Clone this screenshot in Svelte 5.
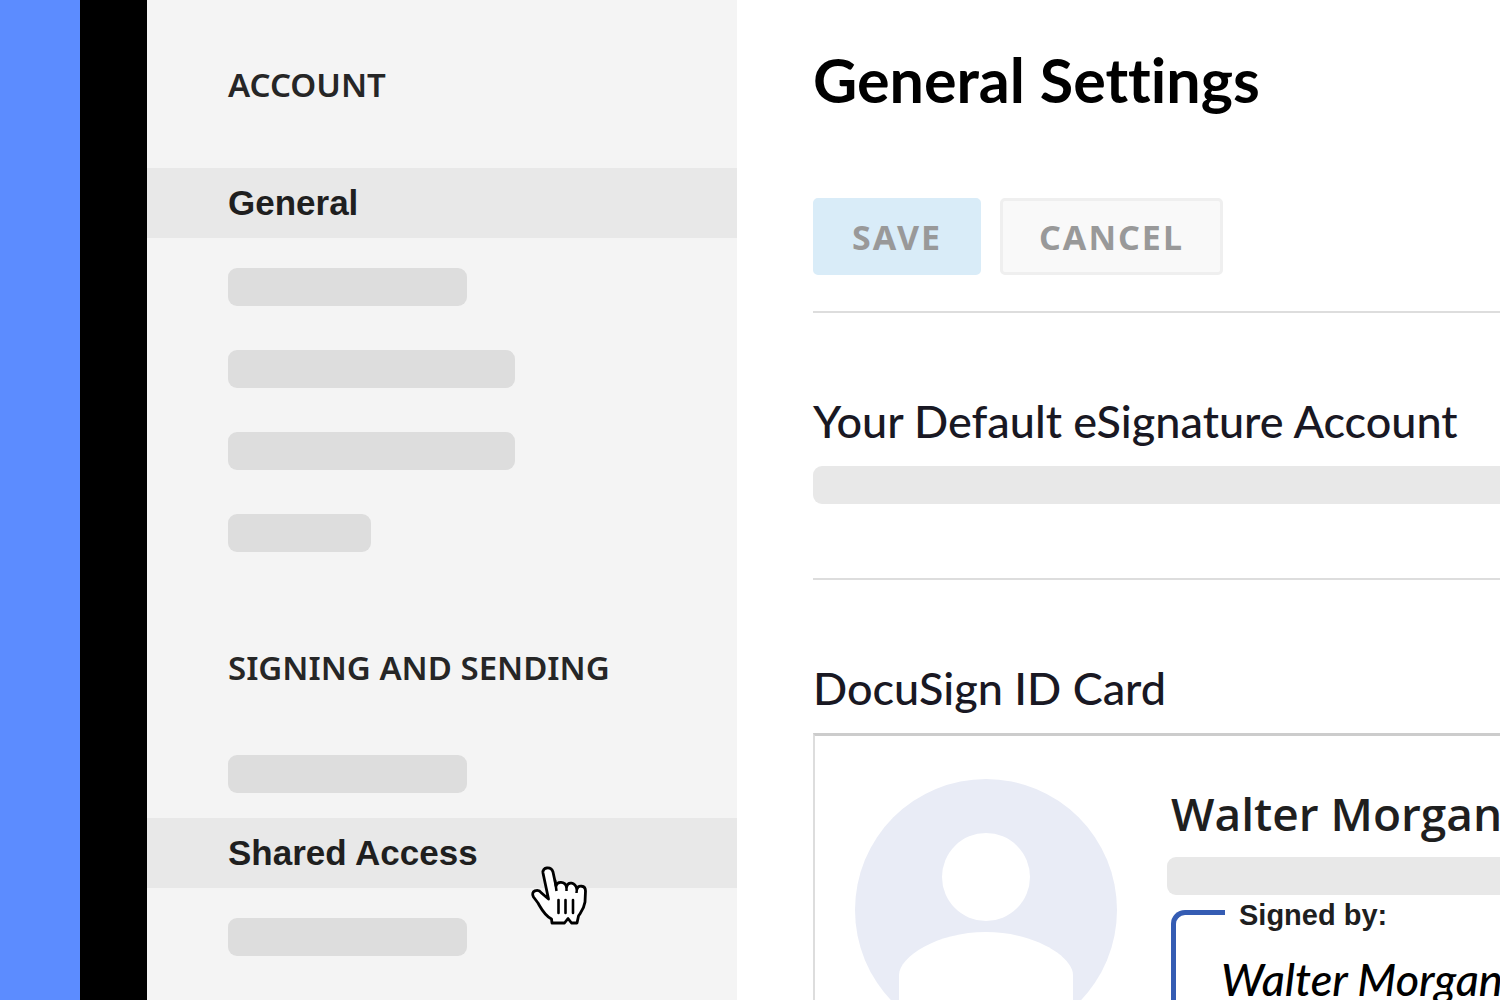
<script>
  const accountItems = ['medium', 'large', 'large', 'small'];
</script>

<div class="page">
  <div class="backdrop"></div>
  <div class="frame"></div>

  <nav class="sidebar" aria-label="Settings">
    <h2 class="group">ACCOUNT</h2>
    <a class="row" href="#general">General</a>
    <div class="placeholders">
      {#each accountItems as size}
        <span class="bar {size}"></span>
      {/each}
    </div>

    <h2 class="group second">SIGNING AND SENDING</h2>
    <span class="bar medium"></span>
    <a class="row shared" href="#shared-access">
      Shared Access
      <svg class="pointer" viewBox="0 0 120 90" aria-hidden="true">
        <path
          d="M48.500 49L43 23C42 17 51 16 53 22L56 36C57 31 65 31 66.500 37C68 31 75 32 77 39C78 35 85.500 35 85.500 41L85 52C84 59 81 62 78.500 66L77 73H71.500L68 68.500L64.500 73H52L51.500 69C44 65 41 58 38 53L33.500 47C30 41 38 38 41.500 43Z"
          fill="#fff" stroke="#000" stroke-width="2.800" stroke-linejoin="round" />
        <path d="M55 30L56.500 41M66.500 36V41M77 38L76.500 43" fill="none" stroke="#000" stroke-width="2.500" />
        <path d="M58.500 50V63M65.500 50V63M73 50V63" fill="none" stroke="#000" stroke-width="2.600" stroke-linecap="round" />
      </svg>
    </a>
    <span class="bar medium last"></span>
  </nav>

  <main class="content">
    <h1>General Settings</h1>
    <div class="actions">
      <button class="save" type="button">SAVE</button>
      <button class="cancel" type="button">CANCEL</button>
    </div>

    <section class="block">
      <h2>Your Default eSignature Account</h2>
      <span class="bar wide"></span>
    </section>

    <section class="block">
      <h2>DocuSign ID Card</h2>
      <div class="card">
        <svg class="avatar" viewBox="0 0 262 262" aria-hidden="true">
          <circle cx="131" cy="131" r="131" fill="#e9ecf6" />
          <circle cx="131" cy="98" r="44" fill="#fff" />
          <path d="M44 262V196C44 178 82 153 131 153S218 178 218 196V262Z" fill="#fff" />
        </svg>
        <div class="identity">
          <p class="name">Walter Morgan</p>
          <span class="bar wide"></span>
          <div class="signature">
            <div class="bracket"></div>
            <div class="signed">
              <p class="label">Signed by:</p>
              <p class="script">Walter Morgan</p>
            </div>
          </div>
        </div>
      </div>
    </section>
  </main>
</div>

<style>
  :global(body) {
    margin: 0;
    background: #fff;
  }

  .page {
    display: flex;
    height: 100vh;
    overflow: hidden;
    font-family: "Liberation Sans", Arial, sans-serif;
    font-variant-ligatures: none;
    color: #1f1f1f;
  }

  h1,
  h2,
  p {
    margin: 0;
  }

  .backdrop {
    flex: 0 0 80px;
    background: #5c8cff;
  }

  .frame {
    flex: 0 0 67px;
    background: #000;
  }

  .sidebar {
    flex: 0 0 590px;
    background: #f4f4f4;
    display: flex;
    flex-direction: column;
  }

  .group {
    padding: 65px 0 63px 81px;
    font-family: "Noto Sans", sans-serif;
    font-size: 33px;
    font-weight: 600;
    line-height: 40px;
    color: #262626;
  }

  .group.second {
    padding: 96px 0 67px 81px;
  }

  .row {
    position: relative;
    padding-left: 81px;
    font-size: 35px;
    font-weight: 700;
    line-height: 70px;
    color: #1f1f1f;
    background: #e8e8e8;
    text-decoration: none;
    cursor: pointer;
  }

  .placeholders {
    display: flex;
    flex-direction: column;
    gap: 44px;
    padding-top: 30px;
  }

  .bar {
    display: block;
    flex: none;
    height: 38px;
    border-radius: 9px;
    background: #ddd;
  }

  .sidebar .bar {
    margin-left: 81px;
  }

  .small {
    width: 143px;
  }

  .medium {
    width: 239px;
  }

  .large {
    width: 287px;
  }

  .bar.wide {
    border-radius: 9px 0 0 9px;
    background: #e8e8e8;
  }

  .shared {
    margin-top: 25px;
  }

  .last {
    margin-top: 30px;
  }

  .pointer {
    position: absolute;
    left: 353px;
    top: 32px;
    width: 120px;
    height: 90px;
  }

  .content {
    flex: 1;
    min-width: 0;
    padding-left: 76px;
  }

  h1 {
    padding: 44px 0 82px;
    font-family: Lato, sans-serif;
    font-size: 61px;
    font-weight: 700;
    line-height: 72px;
    color: #000;
    white-space: nowrap;
  }

  .actions {
    display: flex;
    gap: 19px;
    padding-bottom: 36px;
  }

  button {
    height: 77px;
    box-sizing: border-box;
    padding: 0 36px;
    border: 3px solid #d9ecf8;
    border-radius: 5px;
    font-family: "Noto Sans", sans-serif;
    font-size: 34px;
    font-weight: 700;
    line-height: 40px;
    letter-spacing: 2px;
    color: #999;
  }

  .save {
    background: #d9ecf8;
  }

  .cancel {
    background: #f9f9f9;
    border-color: #efefef;
  }

  .block {
    border-top: 2px solid #ddd;
    padding: 80px 0 74px;
  }

  .block h2 {
    padding-bottom: 17px;
    font-family: Lato, sans-serif;
    font-size: 45px;
    font-weight: 500;
    line-height: 56px;
    color: #191823;
    white-space: nowrap;
  }

  .card {
    display: flex;
    gap: 50px;
    height: 400px;
    padding: 43px 0 0 40px;
    border-top: 3px solid #ccc;
    border-left: 2px solid #ddd;
  }

  .avatar {
    flex: none;
    width: 262px;
    height: 262px;
  }

  .identity {
    flex: 1;
    min-width: 0;
  }

  .name {
    padding: 6px 0 16px 4px;
    font-family: "Open Sans", sans-serif;
    font-size: 46px;
    font-weight: 600;
    line-height: 56px;
    white-space: nowrap;
  }

  .signature {
    display: flex;
    gap: 14px;
    padding-left: 4px;
  }

  .bracket {
    flex: none;
    width: 49px;
    height: 200px;
    margin-top: 15px;
    border-top: 5px solid #355cb3;
    border-left: 5px solid #355cb3;
    border-top-left-radius: 14px;
  }

  .label {
    font-size: 29px;
    font-weight: 700;
    line-height: 40px;
  }

  .script {
    margin-left: -18px;
    font-family: Lato, cursive;
    font-size: 45px;
    font-style: italic;
    font-weight: 500;
    line-height: 88px;
    color: #000;
    white-space: nowrap;
  }
</style>
